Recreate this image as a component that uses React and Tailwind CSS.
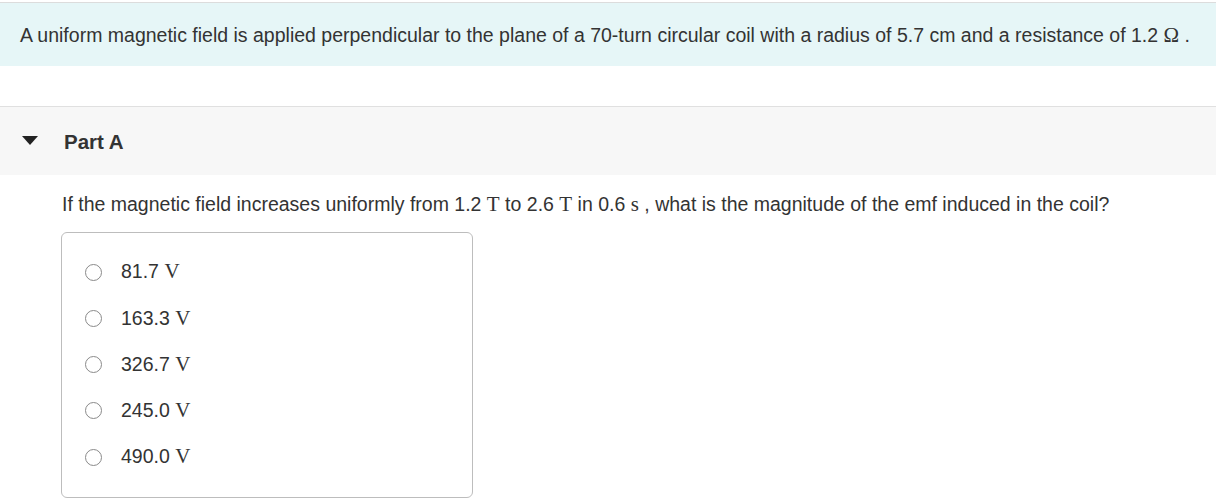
export default function App() {
  const sans = { fontFamily: '"Liberation Sans", Arial, sans-serif' };
  const U = ({ children }) => (
    <span className="text-[21px]" style={{ fontFamily: '"Liberation Serif", "DejaVu Serif", serif' }}>{children}</span>
  );
  const options = ["81.7", "163.3", "326.7", "245.0", "490.0"];
  return (
    <div className="w-full h-[499px] overflow-hidden bg-white text-[#333333]" style={sans}>
      <div className="mt-[2px] border-t border-[#dcdcdc] bg-[#e6f6f7] h-[64px] flex items-center pl-5 text-[19.5px] leading-6">
        <span>
          A uniform magnetic field is applied perpendicular to the plane of a 70-turn circular coil with a radius of 5.7 cm and a resistance of 1.2 <U>Ω</U> .
        </span>
      </div>
      <div className="h-[40px]" />
      <div className="border-t border-[#e0e0e0] bg-[#f7f7f7] h-[69px] flex items-center">
        <svg className="ml-[22px]" width="16" height="10" viewBox="0 0 16 10">
          <polygon points="0,0 16,0 8,9" fill="#222" />
        </svg>
        <span className="ml-[26px] mt-[3px] font-bold text-[20.5px]">Part A</span>
      </div>
      <div className="pl-[62px] pt-[17px] text-[19.5px] leading-6">
        If the magnetic field increases uniformly from 1.2 <U>T</U> to 2.6 <U>T</U> in 0.6 <U>s</U> , what is the magnitude of the emf induced in the coil?
      </div>
      <div className="ml-[61px] mt-[16px] w-[412px] h-[266px] border border-[#bdbdbd] rounded-[6px] pt-[16px]">
        {options.map((o) => (
          <div key={o} className="h-[46.25px] flex items-center pl-[23px]">
            <span className="w-[17px] h-[17px] rounded-full border border-[#8a8a8a] bg-white" />
            <span className="ml-[19px] text-[19.5px]">
              {o} <U>V</U>
            </span>
          </div>
        ))}
      </div>
    </div>
  );
}
